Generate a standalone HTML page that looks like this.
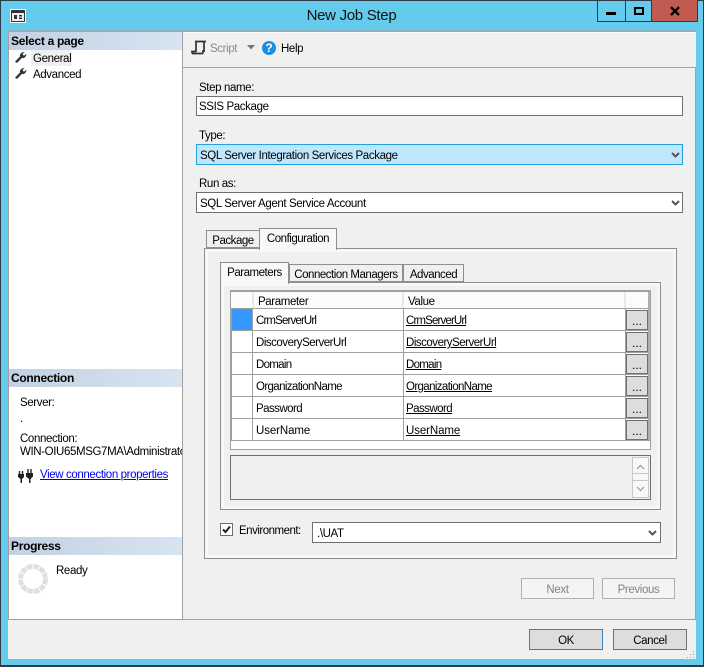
<!DOCTYPE html>
<html><head><meta charset="utf-8"><style>
html,body{margin:0;padding:0}
body{width:704px;height:667px;overflow:hidden;position:relative;background:#65cbec;font:11.5px/20px "Liberation Sans",sans-serif;letter-spacing:-.38px;color:#000}
div,span.a,svg.a{position:absolute;box-sizing:border-box}
.t{white-space:nowrap}
.box{background:#fff;border:1px solid #707070}
.hd{left:9px;width:173px;height:18px;background:linear-gradient(90deg,#c2d1e1,#d7e4f2);font-weight:bold;font-size:12px;line-height:14px;letter-spacing:-.3px;padding:2px 0 0 2px}
.line{background:#a0a0a0}
.tab{background:#f0f0f0;border:1px solid #8e8f8f;text-align:center;letter-spacing:-.48px}
.u{text-decoration:underline}
.dots{left:626px;width:22px;height:20px;background:#dddddd;border:1px solid #6f6f6f;text-align:center;font-size:12px;letter-spacing:0;line-height:20px}
.btn{background:#dddddd;border:1px solid #707070;text-align:center;line-height:21px}
.dis{background:#f4f4f4;border:1px solid #adb2b5;color:#838383;text-align:center;line-height:21px}
.rl{left:232px;width:416px;height:1px;background:#a0a0a0}
.cl{top:308px;width:1px;height:132px;background:#a0a0a0}
.hs{top:292px;width:2px;height:16px;background:#e8e8e8}
</style></head><body>
<div style="left:0;top:0;width:704px;height:667px;border:1px solid #2f3b44;border-bottom-width:2px"></div>
<svg class="a" style="left:10px;top:9px" width="16" height="14" viewBox="0 0 16 14"><rect x="0" y="0" width="16" height="14" fill="#fff"/><rect x="1.5" y="1.5" width="13" height="11" fill="#e8eef2" stroke="#333"/><rect x="2" y="2" width="12" height="2" fill="#333"/><rect x="4" y="6" width="3" height="4" fill="#333"/><rect x="9" y="6" width="3" height="1.5" fill="#333"/><rect x="9" y="8.5" width="3" height="1.5" fill="#333"/></svg>
<div class="t" style="left:0;top:7px;width:703px;text-align:center;font-size:15px;letter-spacing:-.3px;line-height:18px;color:#111">New Job Step</div>
<div style="left:597px;top:0;width:29px;height:22px;border:1px solid #2f3b44;border-top:0"></div>
<div style="left:606px;top:12px;width:10px;height:3px;background:#000"></div>
<div style="left:625px;top:0;width:27px;height:22px;border:1px solid #2f3b44;border-top:0"></div>
<div style="left:634px;top:7px;width:10px;height:8px;border:2px solid #000"></div>
<div style="left:651px;top:0;width:47px;height:22px;background:#c15a50;border:1px solid #2f3b44;border-top:0"></div>
<svg class="a" style="left:670px;top:6px" width="10" height="10" viewBox="0 0 10 10"><path d="M1 1.2L9 9M9 1.2L1 9" stroke="#000" stroke-width="2.4" fill="none"/></svg>

<div style="left:8px;top:30px;width:688px;height:629px;background:#f0f0f0;border-top:2px solid #8fb0bf"></div>
<div style="left:9px;top:32px;width:173px;height:587px;background:#fff"></div>
<div class="line" style="left:182px;top:32px;width:1px;height:587px"></div>
<div class="line" style="left:8px;top:32px;width:1px;height:587px"></div>
<div class="line" style="left:8px;top:619px;width:688px;height:1px"></div>
<div class="line" style="left:183px;top:67px;width:513px;height:1px"></div>
<div style="left:183px;top:32px;width:513px;height:1px;background:#fafafa"></div>
<div style="left:695px;top:67px;width:1px;height:552px;background:#a0a0a0"></div>

<div class="hd t" style="top:32px">Select a page</div>
<div style="left:31px;top:50px;width:41px;height:16px;background:#f0f0f0"></div>
<svg class="a" style="left:14px;top:51px" width="13" height="13" viewBox="0 0 13 13"><path d="M1 10.5L6 5.5C5.5 3 7.5 1 10.5 1L8.5 3.2L10 4.8L12.3 2.7C12.5 5.5 10.5 7.5 7.8 7L3 12Z" fill="#333"/></svg>
<svg class="a" style="left:14px;top:67px" width="13" height="13" viewBox="0 0 13 13"><path d="M1 10.5L6 5.5C5.5 3 7.5 1 10.5 1L8.5 3.2L10 4.8L12.3 2.7C12.5 5.5 10.5 7.5 7.8 7L3 12Z" fill="#333"/></svg>
<div class="t" style="left:33px;top:49px">General</div>
<div class="t" style="left:33px;top:65px">Advanced</div>

<div class="hd t" style="top:369px">Connection</div>
<div class="t" style="left:20px;top:393px">Server:</div>
<div class="t" style="left:20px;top:409px">.</div>
<div class="t" style="left:20px;top:429px">Connection:</div>
<div class="t" style="left:20px;top:442px;width:162px;overflow:hidden">WIN-OIU65MSG7MA\Administrator</div>
<svg class="a" style="left:18px;top:469px" width="16" height="14" viewBox="0 0 16 14"><path d="M1.5 2V5M4.5 2V5M10 0V4M13 0V4" stroke="#222" stroke-width="1.4" fill="none"/><path d="M0 5H6V8L4 10V14H2.5V10L0 8ZM8 4H15V7.5L12.5 10V14H11V10L8 7.5Z" fill="#222"/></svg>
<div class="t" style="left:40px;top:465px;color:#0000ee;text-decoration:underline">View connection properties</div>

<div class="hd t" style="top:537px">Progress</div>
<svg class="a" style="left:18px;top:564px" width="30" height="30" viewBox="0 0 30 30"><circle cx="15" cy="15" r="12.5" fill="none" stroke="#dfdfdf" stroke-width="5" stroke-dasharray="5.5 1.05"/></svg>
<div class="t" style="left:56px;top:561px">Ready</div>

<svg class="a" style="left:191px;top:40px" width="16" height="15" viewBox="0 0 16 15"><path d="M4 1.5H15M5 1.5V12M13 1.5V11M1 13.5H12M1 13.5V11.5H5M12 13.5V11H14" fill="none" stroke="#333" stroke-width="1.7"/></svg>
<div class="t" style="left:210px;top:39px;color:#8a8a8a">Script</div>
<svg class="a" style="left:247px;top:45px" width="8" height="5"><path d="M0 0H8L4 4.5Z" fill="#777"/></svg>
<div style="left:262px;top:41px;width:14px;height:14px;border-radius:50%;background:#1c8ee0;color:#fff;font-weight:bold;font-size:12px;letter-spacing:0;line-height:14px;text-align:center">?</div>
<div class="t" style="left:281px;top:39px">Help</div>

<div class="t" style="left:199px;top:78px">Step name:</div>
<div class="box t" style="left:196px;top:96px;width:487px;height:20px;padding:0 0 0 2px">SSIS Package</div>
<div class="t" style="left:199px;top:126px">Type:</div>
<div class="t" style="left:196px;top:144px;width:487px;height:21px;background:#bee6fd;border:1px solid #26a0da;padding:0 0 0 3px;line-height:22px">SQL Server Integration Services Package</div>
<svg class="a" style="left:671px;top:152px" width="9" height="6"><path d="M1 1L4.5 4.5L8 1" fill="none" stroke="#555" stroke-width="2"/></svg>
<div class="t" style="left:199px;top:174px">Run as:</div>
<div class="box t" style="left:196px;top:192px;width:487px;height:21px;padding:0 0 0 3px;line-height:22px">SQL Server Agent Service Account</div>
<svg class="a" style="left:671px;top:200px" width="9" height="6"><path d="M1 1L4.5 4.5L8 1" fill="none" stroke="#555" stroke-width="2"/></svg>

<!-- outer tabs -->
<div style="left:204px;top:248px;width:473px;height:311px;border:1px solid #8e8f8f;background:#f0f0f0"></div>
<div style="left:205px;top:249px;width:471px;height:309px;border:3px solid #f8f8f8"></div>
<div class="tab t" style="left:206px;top:230px;width:54px;height:18px;padding-top:0">Package</div>
<div class="tab t" style="left:259px;top:228px;width:78px;height:22px;background:#f8f8f8;border-bottom:0;padding-top:0">Configuration</div>

<!-- inner tabs -->
<div style="left:220px;top:282px;width:441px;height:228px;border:1px solid #8e8f8f;background:#f0f0f0"></div>
<div style="left:221px;top:283px;width:439px;height:226px;border:3px solid #f8f8f8"></div>
<div class="tab t" style="left:289px;top:264px;width:114px;height:18px;padding-top:0">Connection Managers</div>
<div class="tab t" style="left:403px;top:264px;width:61px;height:18px;padding-top:0">Advanced</div>
<div class="tab t" style="left:220px;top:262px;width:69px;height:22px;background:#f8f8f8;border-bottom:0;padding-top:0">Parameters</div>

<!-- grid -->
<div style="left:230px;top:290px;width:421px;height:160px;background:#fff;border:1px solid #a0a0a0;border-top:2px solid #a0a0a0"></div>
<div style="left:231px;top:292px;width:419px;height:16px;background:#fbfbfb"></div>
<div style="left:230px;top:308px;width:2px;height:132px;background:#a0a0a0"></div>
<div style="left:232px;top:309px;width:20px;height:21px;background:#3399ff"></div>
<div class="hs" style="left:252px"></div><div class="hs" style="left:402px"></div><div class="hs" style="left:624px"></div>
<div class="cl" style="left:252px"></div>
<div class="cl" style="left:403px"></div>
<div class="cl" style="left:625px"></div>
<div style="left:648px;top:292px;width:2px;height:148px;background:#b0b0b0"></div>
<div class="rl" style="top:308px"></div>
<div class="rl" style="top:330px"></div>
<div class="rl" style="top:352px"></div>
<div class="rl" style="top:374px"></div>
<div class="rl" style="top:396px"></div>
<div class="rl" style="top:418px"></div>
<div class="rl" style="top:440px;left:231px;width:419px"></div>
<div class="t" style="left:258px;top:292px">Parameter</div>
<div class="t" style="left:408px;top:292px">Value</div>
<div class="t" style="left:256px;top:311px;letter-spacing:-.85px">CrmServerUrl</div><div class="t u" style="left:406px;top:311px;letter-spacing:-.85px">CrmServerUrl</div>
<div class="t" style="left:256px;top:333px;letter-spacing:-.49px">DiscoveryServerUrl</div><div class="t u" style="left:406px;top:333px;letter-spacing:-.49px">DiscoveryServerUrl</div>
<div class="t" style="left:256px;top:355px;letter-spacing:-.7px">Domain</div><div class="t u" style="left:406px;top:355px;letter-spacing:-.7px">Domain</div>
<div class="t" style="left:256px;top:377px;letter-spacing:-.62px">OrganizationName</div><div class="t u" style="left:406px;top:377px;letter-spacing:-.62px">OrganizationName</div>
<div class="t" style="left:256px;top:399px;letter-spacing:-.55px">Password</div><div class="t u" style="left:406px;top:399px;letter-spacing:-.55px">Password</div>
<div class="t" style="left:256px;top:421px;letter-spacing:-.1px">UserName</div><div class="t u" style="left:406px;top:421px;letter-spacing:-.1px">UserName</div>
<div class="dots" style="top:310px">...</div>
<div class="dots" style="top:332px">...</div>
<div class="dots" style="top:354px">...</div>
<div class="dots" style="top:376px">...</div>
<div class="dots" style="top:398px">...</div>
<div class="dots" style="top:420px">...</div>

<!-- description -->
<div style="left:230px;top:455px;width:421px;height:45px;border:1px solid #707070;background:#f0f0f0"></div>
<div style="left:632px;top:457px;width:17px;height:41px;background:#f8f8f8;border:1px solid #c8c8c8"></div>
<div style="left:632px;top:473px;width:17px;height:8px;border:1px solid #c8c8c8;border-width:1px 0"></div>
<svg class="a" style="left:636px;top:464px" width="9" height="6"><path d="M1 5L4.5 1.5L8 5" fill="none" stroke="#999" stroke-width="1.2"/></svg>
<svg class="a" style="left:636px;top:486px" width="9" height="6"><path d="M1 1L4.5 4.5L8 1" fill="none" stroke="#999" stroke-width="1.2"/></svg>

<!-- environment -->
<div style="left:220px;top:523px;width:13px;height:13px;background:#fff;border:1px solid #707070"></div>
<svg class="a" style="left:221px;top:524px" width="11" height="11"><path d="M2 5.5L4.5 8L9 2.5" fill="none" stroke="#222" stroke-width="2"/></svg>
<div class="t" style="left:239px;top:521px;letter-spacing:-.5px">Environment:</div>
<div class="box t" style="left:312px;top:522px;width:349px;height:21px;padding:1px 0 0 4px">.\UAT</div>
<svg class="a" style="left:648px;top:530px" width="9" height="6"><path d="M1 1L4.5 4.5L8 1" fill="none" stroke="#555" stroke-width="2"/></svg>

<div class="dis t" style="left:521px;top:578px;width:73px;height:21px;line-height:22px">Next</div>
<div class="dis t" style="left:602px;top:578px;width:73px;height:21px;line-height:22px">Previous</div>
<div class="btn t" style="left:529px;top:629px;width:74px;height:21px;border-color:#3c7fb1;line-height:22px">OK</div>
<div class="btn t" style="left:613px;top:629px;width:74px;height:21px;line-height:22px">Cancel</div>
<svg class="a" style="left:686px;top:650px" width="9" height="9"><path d="M7 1h1v1H7zM4 4h1v1H4zM7 4h1v1H7zM1 7h1v1H1zM4 7h1v1H4zM7 7h1v1H7z" fill="#a5a5a5"/></svg>
</body></html>
